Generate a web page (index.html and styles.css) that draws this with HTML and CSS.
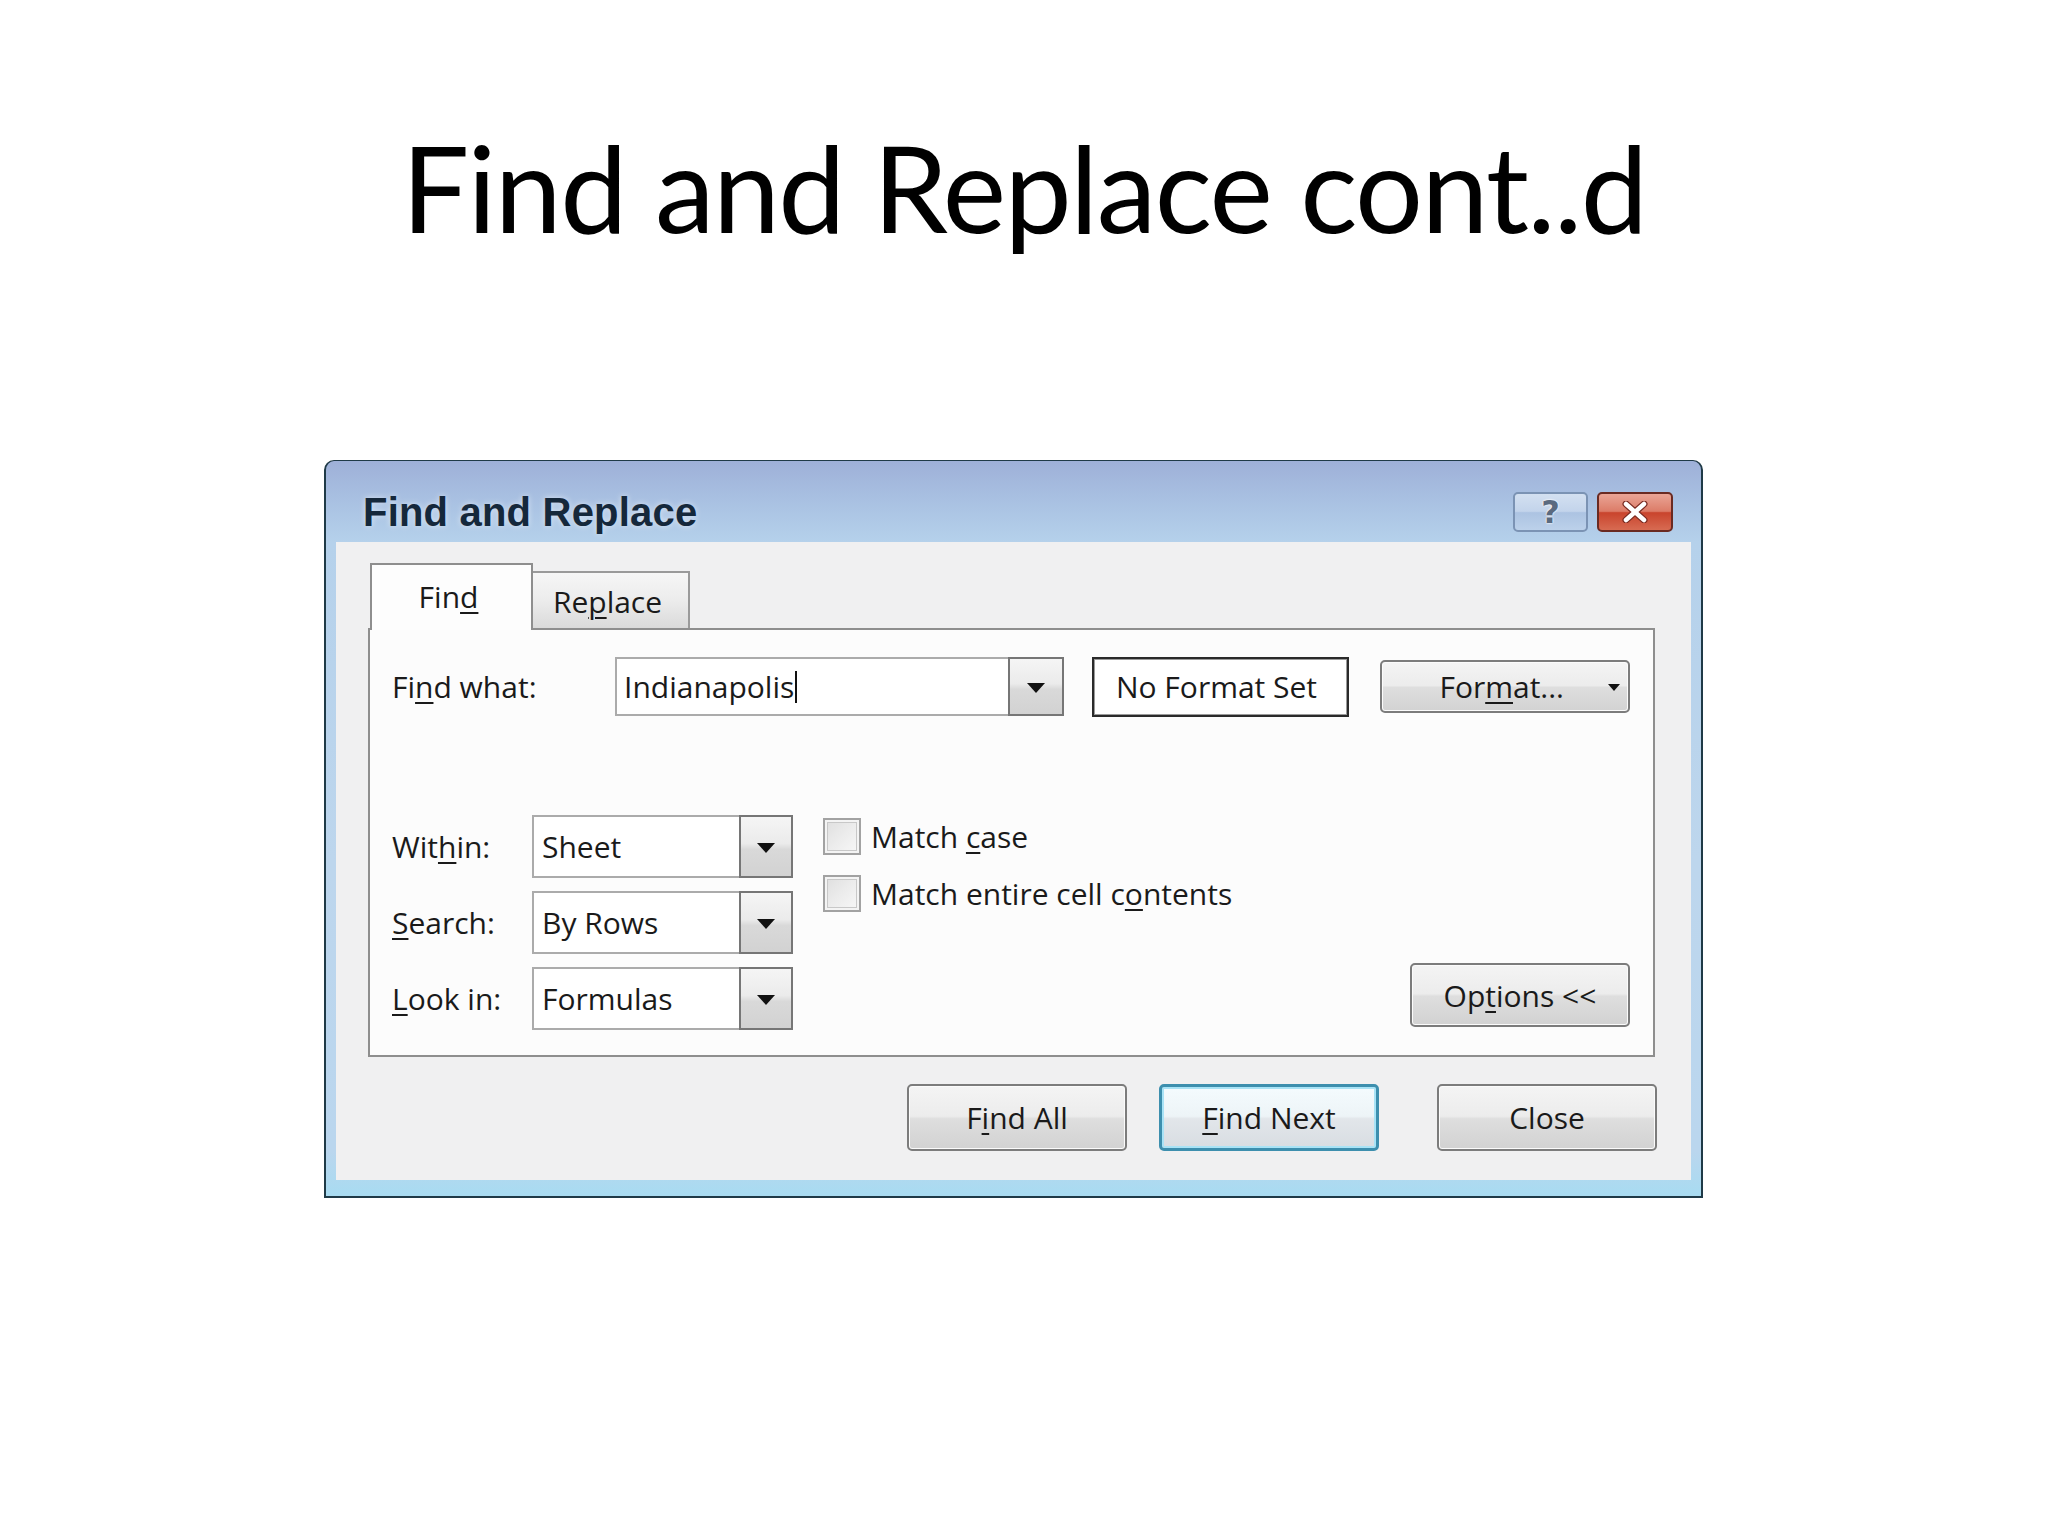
FILE: index.html
```html
<!DOCTYPE html>
<html lang="en">
<head>
<meta charset="utf-8">
<title>Find and Replace cont..d</title>
<link rel="stylesheet" href="styles.css">
</head>
<body>
<div class="slide">
  <h1 class="slide-title">Find and Replace cont..d</h1>
  <div class="dialog">
    <div class="titlebar">
      <span class="dlg-title">Find and Replace</span>
      <div class="caption-btns">
        <span class="cap-btn help"><span class="q">?</span></span>
        <span class="cap-btn close">
          <svg width="30" height="22" viewBox="0 0 30 22">
            <path d="M6 3 L24 19 M24 3 L6 19" stroke="#7a2a20" stroke-width="7" stroke-linecap="round" fill="none"/>
            <path d="M6 3 L24 19 M24 3 L6 19" stroke="#ffffff" stroke-width="4.5" stroke-linecap="round" fill="none"/>
          </svg>
        </span>
      </div>
    </div>
    <div class="client">
      <div class="tabs">
        <div class="tab tab-active">Fin<u>d</u></div>
        <div class="tab tab-back">Re<u>p</u>lace</div>
      </div>
      <div class="panel">
        <div class="row-find">
          <span class="lbl lbl-find">Fi<u>n</u>d what:</span>
          <div class="combo combo-find">
            <span class="combo-text">Indianapolis<span class="caret"></span></span>
            <span class="dd"><i class="tri"></i></span>
          </div>
          <div class="nofmt">No Format Set</div>
          <div class="btn btn-format"><span class="fmt-text">For<u>m</u>at...</span><i class="tri tri-small"></i></div>
        </div>
        <div class="row-opts">
          <div class="selects">
            <div class="sel-row">
              <span class="lbl lbl-sel">Wit<u>h</u>in:</span>
              <div class="combo combo-sel"><span class="combo-text">Sheet</span><span class="dd"><i class="tri"></i></span></div>
            </div>
            <div class="sel-row">
              <span class="lbl lbl-sel"><u>S</u>earch:</span>
              <div class="combo combo-sel"><span class="combo-text">By Rows</span><span class="dd"><i class="tri"></i></span></div>
            </div>
            <div class="sel-row">
              <span class="lbl lbl-sel"><u>L</u>ook in:</span>
              <div class="combo combo-sel"><span class="combo-text">Formulas</span><span class="dd"><i class="tri"></i></span></div>
            </div>
          </div>
          <div class="checks">
            <div class="check"><span class="box"></span><span class="check-label">Match <u>c</u>ase</span></div>
            <div class="check"><span class="box"></span><span class="check-label">Match entire cell c<u>o</u>ntents</span></div>
          </div>
          <div class="btn btn-options">Op<u>t</u>ions &lt;&lt;</div>
        </div>
      </div>
      <div class="actions">
        <div class="btn btn-act">F<u>i</u>nd All</div>
        <div class="btn btn-act btn-focus"><u>F</u>ind Next</div>
        <div class="btn btn-act btn-close">Close</div>
      </div>
    </div>
  </div>
</div>
</body>
</html>
```
FILE: styles.css
```css
* { box-sizing: border-box; }

html, body {
  margin: 0;
  padding: 0;
  background: #ffffff;
}

body {
  width: 2048px;
  height: 1536px;
  overflow: hidden;
  font-family: "Open Sans", "Noto Sans", sans-serif;
}

.slide {
  display: flex;
  flex-direction: column;
  width: 2048px;
  height: 1536px;
}

.slide-title {
  margin: 0;
  padding-top: 127px;
  height: 250px;
  font-family: Lato, "Open Sans", sans-serif;
  font-weight: 400;
  font-size: 120px;
  line-height: 120px;
  letter-spacing: -1.6px;
  color: #000;
  text-align: center;
}

/* ---------- dialog window ---------- */
.dialog {
  margin: 210px 0 0 324px;
  width: 1379px;
  height: 738px;
  border: 2px solid #1f3a47;
  border-top-width: 1px;
  border-radius: 10px 10px 0 0;
  background: linear-gradient(180deg, #9eb0d8 0px, #a9c1e2 40px, #b5d1eb 81px, #bdd6ed 400px, #bad6ee 690px, #a9dbf1 732px);
  display: flex;
  flex-direction: column;
}

.titlebar {
  height: 81px;
  padding: 20px 28px 0 37px;
  display: flex;
  align-items: flex-start;
  justify-content: space-between;
}

.dlg-title {
  font-family: "Liberation Sans", Arial, sans-serif;
  font-weight: 700;
  font-size: 40px;
  line-height: 40px;
  color: #15283b;
  letter-spacing: 0.2px;
  margin-top: 11px;
  text-shadow: 0 0 6px rgba(255, 255, 255, 0.6);
}

.caption-btns {
  display: flex;
  gap: 9px;
  margin-top: 11px;
}

.cap-btn {
  height: 40px;
  border-radius: 5px;
  display: flex;
  align-items: center;
  justify-content: center;
}

.help {
  width: 75px;
  border: 2px solid #7b93b4;
  background: linear-gradient(180deg, #d3e0f1 0%, #c3d4eb 48%, #acc3e2 52%, #bcd1ea 100%);
}

.q {
  font-family: "DejaVu Sans", sans-serif;
  font-weight: 700;
  font-size: 32px;
  line-height: 32px;
  color: #5a6a80;
  text-shadow: 0 0 2px #fff, 0 0 2px #fff;
}

.close {
  width: 76px;
  border: 2px solid #6a2a22;
  background: linear-gradient(180deg, #eaa596 0%, #dc7c68 48%, #c9442d 52%, #d76b52 100%);
}

/* ---------- client area ---------- */
.client {
  margin: 0 10px;
  height: 638px;
  background: #f0f0f1;
  padding: 21px 0 0 0;
  display: flex;
  flex-direction: column;
  color: #1a1a1a;
  font-size: 30px;
}

u {
  text-decoration-thickness: 2px;
  text-underline-offset: 4px;
}

.tabs {
  display: flex;
  align-items: flex-end;
  height: 65px;
  padding-left: 34px;
}

.tab {
  display: flex;
  align-items: center;
  justify-content: center;
  font-size: 30px;
  color: #1a1a1a;
}

.tab-active {
  width: 163px;
  height: 67px;
  margin-bottom: -2px;
  position: relative;
  z-index: 1;
  background: #fdfdfd;
  border: 2px solid #8e8e8e;
  border-bottom: none;
  padding-bottom: 2px;
  padding-right: 6px;
}

.tab-back {
  width: 157px;
  height: 57px;
  border: 2px solid #9a9a9a;
  border-left: none;
  border-bottom: none;
  background: linear-gradient(180deg, #f6f6f6 0%, #ececec 50%, #dadada 100%);
  padding-top: 2px;
  padding-right: 6px;
}

.panel {
  margin-left: 32px;
  width: 1287px;
  height: 429px;
  border: 2px solid #8e8e8e;
  background: #fcfcfc;
  padding: 27px 23px 0 22px;
}

.row-find {
  display: flex;
  align-items: center;
  height: 59px;
}

.lbl {
  color: #1a1a1a;
  white-space: nowrap;
}

.lbl-find { width: 223px; }
.lbl-sel { width: 140px; }

.combo {
  display: flex;
  align-items: stretch;
  background: #ffffff;
  border: 2px solid #ababab;
}

.combo-find {
  width: 449px;
  height: 59px;
}

.combo-sel {
  width: 261px;
  height: 63px;
}

.combo-text {
  flex: 1;
  display: flex;
  align-items: center;
  padding-left: 7px;
  color: #1a1a1a;
  white-space: nowrap;
}

.combo-sel .combo-text { padding-left: 8px; }

.caret {
  display: inline-block;
  width: 2px;
  height: 32px;
  background: #111;
  margin-left: 1px;
}

.dd {
  width: 56px;
  margin: -2px -2px -2px 0;
  border: 2px solid #767676;
  background: linear-gradient(180deg, #f5f5f5 0%, #ebebeb 45%, #d9d9d9 55%, #d2d2d2 100%);
  display: flex;
  align-items: center;
  justify-content: center;
}

.combo-sel .dd { width: 54px; }

.tri {
  display: block;
  width: 0;
  height: 0;
  border-left: 9px solid transparent;
  border-right: 9px solid transparent;
  border-top: 10px solid #111;
  margin-top: 2px;
}

.tri-small {
  border-left-width: 6px;
  border-right-width: 6px;
  border-top-width: 7px;
}

.nofmt {
  margin-left: 28px;
  width: 257px;
  height: 60px;
  border: 2px solid #2a2a2a;
  box-shadow: inset 0 0 0 1px #9a9a9a;
  background: #ffffff;
  display: flex;
  align-items: center;
  justify-content: center;
  padding-right: 8px;
  white-space: nowrap;
}

.btn {
  display: flex;
  align-items: center;
  justify-content: center;
  border: 2px solid #7c7c7c;
  border-radius: 5px;
  background: linear-gradient(180deg, #f4f4f4 0%, #ececec 48%, #dedede 52%, #d2d2d2 100%);
  box-shadow: inset 0 0 0 1px #fbfbfb;
  color: #1a1a1a;
  white-space: nowrap;
}

.btn-format {
  margin-left: 31px;
  width: 250px;
  height: 53px;
  justify-content: flex-end;
  padding-right: 8px;
}

.fmt-text {
  margin-right: 44px;
}

.row-opts {
  display: flex;
  margin-top: 99px;
}

.selects {
  display: flex;
  flex-direction: column;
  gap: 13px;
}

.sel-row {
  display: flex;
  align-items: center;
}

.checks {
  margin-left: 30px;
  padding-top: 3px;
  display: flex;
  flex-direction: column;
  gap: 20px;
}

.check {
  display: flex;
  align-items: center;
  gap: 10px;
  height: 37px;
}

.box {
  width: 38px;
  height: 37px;
  border: 2px solid #a2a2a2;
  background: linear-gradient(135deg, #dedede 0%, #ececec 50%, #f8f8f8 100%);
  box-shadow: inset 0 0 0 2px #f4f4f4, inset 0 0 0 3px #c8c8c8;
}

.check-label {
  white-space: nowrap;
  color: #1a1a1a;
}

.btn-options {
  margin-left: auto;
  align-self: flex-end;
  margin-bottom: 3px;
  width: 220px;
  height: 64px;
}

.actions {
  display: flex;
  justify-content: flex-end;
  gap: 32px;
  margin-top: 27px;
  padding-right: 34px;
}

.btn-act {
  width: 220px;
  height: 67px;
}

.btn-close {
  margin-left: 26px;
}

.btn-focus {
  border: 3px solid #3d8fae;
  background: linear-gradient(180deg, #f4fbfe 0%, #edf4f7 48%, #e2e6ea 52%, #d8dde2 100%);
  box-shadow: inset 0 0 0 2px #a9e3f6;
}
```
